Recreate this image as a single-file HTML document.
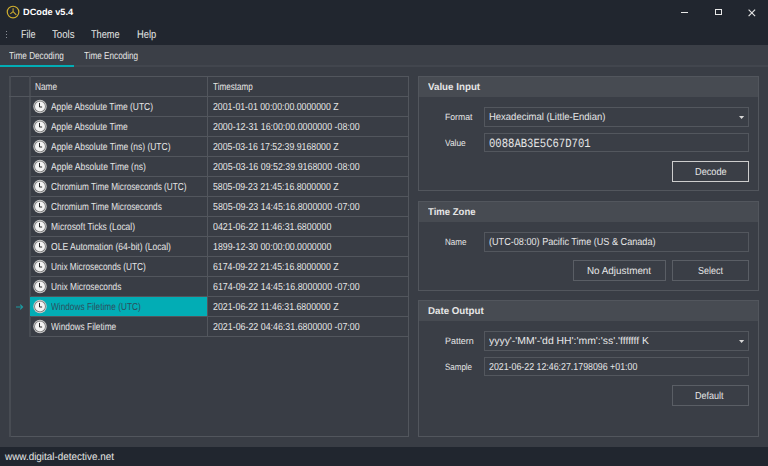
<!DOCTYPE html><html><head><meta charset="utf-8"><style>
html,body{margin:0;padding:0;}
body{width:768px;height:466px;position:relative;overflow:hidden;background:#393d45;font-family:"Liberation Sans",sans-serif;color:#e6e6e6;}
.t{position:absolute;white-space:nowrap;line-height:1;transform-origin:0 0;text-rendering:geometricPrecision;}
</style></head><body>
<div style="position:absolute;left:0px;top:0px;width:768px;height:45px;background:#21262f"></div>
<svg width="16" height="16" viewBox="0 0 16 16" style="position:absolute;left:4.55px;top:4.4px"><circle cx="8.05" cy="8.05" r="5.8" stroke="#cfae2f" stroke-width="1.2" fill="none"/><path d="M8.1 4.2V7.6L5.3 9.9M8.1 7.6L11.3 10.8" stroke="#cfae2f" stroke-width="1.05" fill="none"/></svg>
<div class="t" style="left:23.30px;top:8px;font-size:9.1px;font-family:'Liberation Sans',sans-serif;font-weight:bold;color:#ffffff;transform:scaleX(1.0129);">DCode v5.4</div>
<div style="position:absolute;left:681px;top:12px;width:7px;height:1.2px;background:#e8e8e8"></div>
<div style="position:absolute;left:715px;top:9px;width:7px;height:6px;border:1.2px solid #e8e8e8;box-sizing:border-box"></div>
<svg width="10" height="10" viewBox="0 0 10 10" style="position:absolute;left:747px;top:7.6px"><path d="M1.6 1.6L8.1 8.1M8.1 1.6L1.6 8.1" stroke="#e4e4e4" stroke-width="1.15"/></svg>
<div style="position:absolute;left:6px;top:31px;width:1px;height:1px;background:#8a8e96"></div>
<div style="position:absolute;left:6px;top:34px;width:1px;height:1px;background:#8a8e96"></div>
<div style="position:absolute;left:6px;top:37px;width:1px;height:1px;background:#8a8e96"></div>
<div class="t" style="left:20.80px;top:30px;font-size:11.3px;font-family:'Liberation Sans',sans-serif;transform:scaleX(0.8020);">File</div>
<div class="t" style="left:52.00px;top:30px;font-size:11.3px;font-family:'Liberation Sans',sans-serif;transform:scaleX(0.8569);">Tools</div>
<div class="t" style="left:91.30px;top:30px;font-size:11.3px;font-family:'Liberation Sans',sans-serif;transform:scaleX(0.8133);">Theme</div>
<div class="t" style="left:137.20px;top:30px;font-size:11.3px;font-family:'Liberation Sans',sans-serif;transform:scaleX(0.8260);">Help</div>
<div style="position:absolute;left:0px;top:45px;width:768px;height:20px;background:#3b3f47"></div>
<div style="position:absolute;left:74px;top:65px;width:694px;height:2px;background:#42464e"></div>
<div style="position:absolute;left:0px;top:65px;width:74px;height:2px;background:#02adb5"></div>
<div class="t" style="left:9.40px;top:52px;font-size:10.2px;font-family:'Liberation Sans',sans-serif;transform:scaleX(0.8033);">Time Decoding</div>
<div class="t" style="left:83.75px;top:52px;font-size:10.2px;font-family:'Liberation Sans',sans-serif;transform:scaleX(0.8004);">Time Encoding</div>
<div style="position:absolute;left:9px;top:76px;width:400px;height:361px;background:#393d45;border:1px solid #52565d;box-sizing:border-box"></div>
<div style="position:absolute;left:9px;top:76px;width:2px;height:361px;background:#484c53"></div>
<div style="position:absolute;left:29px;top:76px;width:2px;height:261px;background:#484c53"></div>
<div style="position:absolute;left:207px;top:76px;width:1px;height:261px;background:#52565d"></div>
<div style="position:absolute;left:9px;top:96px;width:400px;height:1px;background:#52565d"></div>
<div class="t" style="left:34.70px;top:83px;font-size:10.2px;font-family:'Liberation Sans',sans-serif;transform:scaleX(0.8135);">Name</div>
<div class="t" style="left:212.90px;top:83px;font-size:10.2px;font-family:'Liberation Sans',sans-serif;transform:scaleX(0.7970);">Timestamp</div>
<div style="position:absolute;left:31px;top:116px;width:377px;height:1px;background:#52565d"></div>
<svg width="14" height="15" viewBox="0 0 14 15" style="position:absolute;left:33px;top:99px"><circle cx="7" cy="7.5" r="6.7" fill="#c9c9c9"/><circle cx="7" cy="7.5" r="5.7" fill="#6e6e6e"/><circle cx="7" cy="7.5" r="5.0" fill="#f3f3f3"/><path d="M6.5 3.9V8H9.1" stroke="#2a2a2a" stroke-width="1" fill="none"/></svg>
<div class="t" style="left:50.80px;top:103px;font-size:10.2px;font-family:'Liberation Sans',sans-serif;transform:scaleX(0.8262);">Apple Absolute Time (UTC)</div>
<div class="t" style="left:212.90px;top:103px;font-size:10.2px;font-family:'Liberation Sans',sans-serif;transform:scaleX(0.8591);">2001-01-01 00:00:00.0000000 Z</div>
<div style="position:absolute;left:31px;top:136px;width:377px;height:1px;background:#52565d"></div>
<svg width="14" height="15" viewBox="0 0 14 15" style="position:absolute;left:33px;top:119px"><circle cx="7" cy="7.5" r="6.7" fill="#c9c9c9"/><circle cx="7" cy="7.5" r="5.7" fill="#6e6e6e"/><circle cx="7" cy="7.5" r="5.0" fill="#f3f3f3"/><path d="M6.5 3.9V8H9.1" stroke="#2a2a2a" stroke-width="1" fill="none"/></svg>
<div class="t" style="left:50.80px;top:123px;font-size:10.2px;font-family:'Liberation Sans',sans-serif;transform:scaleX(0.8269);">Apple Absolute Time</div>
<div class="t" style="left:212.90px;top:123px;font-size:10.2px;font-family:'Liberation Sans',sans-serif;transform:scaleX(0.8686);">2000-12-31 16:00:00.0000000 -08:00</div>
<div style="position:absolute;left:31px;top:156px;width:377px;height:1px;background:#52565d"></div>
<svg width="14" height="15" viewBox="0 0 14 15" style="position:absolute;left:33px;top:139px"><circle cx="7" cy="7.5" r="6.7" fill="#c9c9c9"/><circle cx="7" cy="7.5" r="5.7" fill="#6e6e6e"/><circle cx="7" cy="7.5" r="5.0" fill="#f3f3f3"/><path d="M6.5 3.9V8H9.1" stroke="#2a2a2a" stroke-width="1" fill="none"/></svg>
<div class="t" style="left:50.80px;top:143px;font-size:10.2px;font-family:'Liberation Sans',sans-serif;transform:scaleX(0.8307);">Apple Absolute Time (ns) (UTC)</div>
<div class="t" style="left:212.90px;top:143px;font-size:10.2px;font-family:'Liberation Sans',sans-serif;transform:scaleX(0.8591);">2005-03-16 17:52:39.9168000 Z</div>
<div style="position:absolute;left:31px;top:176px;width:377px;height:1px;background:#52565d"></div>
<svg width="14" height="15" viewBox="0 0 14 15" style="position:absolute;left:33px;top:159px"><circle cx="7" cy="7.5" r="6.7" fill="#c9c9c9"/><circle cx="7" cy="7.5" r="5.7" fill="#6e6e6e"/><circle cx="7" cy="7.5" r="5.0" fill="#f3f3f3"/><path d="M6.5 3.9V8H9.1" stroke="#2a2a2a" stroke-width="1" fill="none"/></svg>
<div class="t" style="left:50.80px;top:163px;font-size:10.2px;font-family:'Liberation Sans',sans-serif;transform:scaleX(0.8369);">Apple Absolute Time (ns)</div>
<div class="t" style="left:212.90px;top:163px;font-size:10.2px;font-family:'Liberation Sans',sans-serif;transform:scaleX(0.8686);">2005-03-16 09:52:39.9168000 -08:00</div>
<div style="position:absolute;left:31px;top:196px;width:377px;height:1px;background:#52565d"></div>
<svg width="14" height="15" viewBox="0 0 14 15" style="position:absolute;left:33px;top:179px"><circle cx="7" cy="7.5" r="6.7" fill="#c9c9c9"/><circle cx="7" cy="7.5" r="5.7" fill="#6e6e6e"/><circle cx="7" cy="7.5" r="5.0" fill="#f3f3f3"/><path d="M6.5 3.9V8H9.1" stroke="#2a2a2a" stroke-width="1" fill="none"/></svg>
<div class="t" style="left:50.80px;top:183px;font-size:10.2px;font-family:'Liberation Sans',sans-serif;transform:scaleX(0.8056);">Chromium Time Microseconds (UTC)</div>
<div class="t" style="left:212.90px;top:183px;font-size:10.2px;font-family:'Liberation Sans',sans-serif;transform:scaleX(0.8591);">5805-09-23 21:45:16.8000000 Z</div>
<div style="position:absolute;left:31px;top:216px;width:377px;height:1px;background:#52565d"></div>
<svg width="14" height="15" viewBox="0 0 14 15" style="position:absolute;left:33px;top:199px"><circle cx="7" cy="7.5" r="6.7" fill="#c9c9c9"/><circle cx="7" cy="7.5" r="5.7" fill="#6e6e6e"/><circle cx="7" cy="7.5" r="5.0" fill="#f3f3f3"/><path d="M6.5 3.9V8H9.1" stroke="#2a2a2a" stroke-width="1" fill="none"/></svg>
<div class="t" style="left:50.80px;top:203px;font-size:10.2px;font-family:'Liberation Sans',sans-serif;transform:scaleX(0.8051);">Chromium Time Microseconds</div>
<div class="t" style="left:212.90px;top:203px;font-size:10.2px;font-family:'Liberation Sans',sans-serif;transform:scaleX(0.8686);">5805-09-23 14:45:16.8000000 -07:00</div>
<div style="position:absolute;left:31px;top:236px;width:377px;height:1px;background:#52565d"></div>
<svg width="14" height="15" viewBox="0 0 14 15" style="position:absolute;left:33px;top:219px"><circle cx="7" cy="7.5" r="6.7" fill="#c9c9c9"/><circle cx="7" cy="7.5" r="5.7" fill="#6e6e6e"/><circle cx="7" cy="7.5" r="5.0" fill="#f3f3f3"/><path d="M6.5 3.9V8H9.1" stroke="#2a2a2a" stroke-width="1" fill="none"/></svg>
<div class="t" style="left:50.80px;top:223px;font-size:10.2px;font-family:'Liberation Sans',sans-serif;transform:scaleX(0.8290);">Microsoft Ticks (Local)</div>
<div class="t" style="left:212.90px;top:223px;font-size:10.2px;font-family:'Liberation Sans',sans-serif;transform:scaleX(0.8682);">0421-06-22 11:46:31.6800000</div>
<div style="position:absolute;left:31px;top:256px;width:377px;height:1px;background:#52565d"></div>
<svg width="14" height="15" viewBox="0 0 14 15" style="position:absolute;left:33px;top:239px"><circle cx="7" cy="7.5" r="6.7" fill="#c9c9c9"/><circle cx="7" cy="7.5" r="5.7" fill="#6e6e6e"/><circle cx="7" cy="7.5" r="5.0" fill="#f3f3f3"/><path d="M6.5 3.9V8H9.1" stroke="#2a2a2a" stroke-width="1" fill="none"/></svg>
<div class="t" style="left:50.80px;top:243px;font-size:10.2px;font-family:'Liberation Sans',sans-serif;transform:scaleX(0.8373);">OLE Automation (64-bit) (Local)</div>
<div class="t" style="left:212.90px;top:243px;font-size:10.2px;font-family:'Liberation Sans',sans-serif;transform:scaleX(0.8633);">1899-12-30 00:00:00.0000000</div>
<div style="position:absolute;left:31px;top:276px;width:377px;height:1px;background:#52565d"></div>
<svg width="14" height="15" viewBox="0 0 14 15" style="position:absolute;left:33px;top:259px"><circle cx="7" cy="7.5" r="6.7" fill="#c9c9c9"/><circle cx="7" cy="7.5" r="5.7" fill="#6e6e6e"/><circle cx="7" cy="7.5" r="5.0" fill="#f3f3f3"/><path d="M6.5 3.9V8H9.1" stroke="#2a2a2a" stroke-width="1" fill="none"/></svg>
<div class="t" style="left:50.80px;top:263px;font-size:10.2px;font-family:'Liberation Sans',sans-serif;transform:scaleX(0.8129);">Unix Microseconds (UTC)</div>
<div class="t" style="left:212.90px;top:263px;font-size:10.2px;font-family:'Liberation Sans',sans-serif;transform:scaleX(0.8591);">6174-09-22 21:45:16.8000000 Z</div>
<div style="position:absolute;left:31px;top:296px;width:377px;height:1px;background:#52565d"></div>
<svg width="14" height="15" viewBox="0 0 14 15" style="position:absolute;left:33px;top:279px"><circle cx="7" cy="7.5" r="6.7" fill="#c9c9c9"/><circle cx="7" cy="7.5" r="5.7" fill="#6e6e6e"/><circle cx="7" cy="7.5" r="5.0" fill="#f3f3f3"/><path d="M6.5 3.9V8H9.1" stroke="#2a2a2a" stroke-width="1" fill="none"/></svg>
<div class="t" style="left:50.80px;top:283px;font-size:10.2px;font-family:'Liberation Sans',sans-serif;transform:scaleX(0.8183);">Unix Microseconds</div>
<div class="t" style="left:212.90px;top:283px;font-size:10.2px;font-family:'Liberation Sans',sans-serif;transform:scaleX(0.8686);">6174-09-22 14:45:16.8000000 -07:00</div>
<div style="position:absolute;left:30px;top:297px;width:177px;height:19px;background:#02adb5"></div>
<svg width="9" height="8" viewBox="0 0 9 8" style="position:absolute;left:15px;top:303px"><path d="M1 4H7.6M5.2 1.6L7.6 4L5.2 6.4" stroke="#1d9aa1" stroke-width="1.1" fill="none"/></svg>
<div style="position:absolute;left:31px;top:316px;width:377px;height:1px;background:#52565d"></div>
<svg width="14" height="15" viewBox="0 0 14 15" style="position:absolute;left:33px;top:299px"><circle cx="7" cy="7.5" r="6.7" fill="#c9c9c9"/><circle cx="7" cy="7.5" r="5.7" fill="#6e6e6e"/><circle cx="7" cy="7.5" r="5.0" fill="#f3f3f3"/><path d="M6.5 3.9V8H9.1" stroke="#2a2a2a" stroke-width="1" fill="none"/></svg>
<div class="t" style="left:50.80px;top:303px;font-size:10.2px;font-family:'Liberation Sans',sans-serif;color:#2c4f5e;transform:scaleX(0.8126);">Windows Filetime (UTC)</div>
<div class="t" style="left:212.90px;top:303px;font-size:10.2px;font-family:'Liberation Sans',sans-serif;transform:scaleX(0.8635);">2021-06-22 11:46:31.6800000 Z</div>
<div style="position:absolute;left:31px;top:336px;width:377px;height:1px;background:#52565d"></div>
<svg width="14" height="15" viewBox="0 0 14 15" style="position:absolute;left:33px;top:319px"><circle cx="7" cy="7.5" r="6.7" fill="#c9c9c9"/><circle cx="7" cy="7.5" r="5.7" fill="#6e6e6e"/><circle cx="7" cy="7.5" r="5.0" fill="#f3f3f3"/><path d="M6.5 3.9V8H9.1" stroke="#2a2a2a" stroke-width="1" fill="none"/></svg>
<div class="t" style="left:50.80px;top:323px;font-size:10.2px;font-family:'Liberation Sans',sans-serif;transform:scaleX(0.8171);">Windows Filetime</div>
<div class="t" style="left:212.90px;top:323px;font-size:10.2px;font-family:'Liberation Sans',sans-serif;transform:scaleX(0.8686);">2021-06-22 04:46:31.6800000 -07:00</div>
<div style="position:absolute;left:418px;top:76px;width:341px;height:115px;background:#3a3e46;border:1px solid #52565d;box-sizing:border-box"></div>
<div style="position:absolute;left:419px;top:77px;width:339px;height:20px;background:#474b52"></div>
<div class="t" style="left:427.90px;top:83px;font-size:10.0px;font-family:'Liberation Sans',sans-serif;font-weight:bold;transform:scaleX(0.9768);">Value Input</div>
<div class="t" style="left:445.00px;top:113px;font-size:9.2px;font-family:'Liberation Sans',sans-serif;transform:scaleX(0.9438);">Format</div>
<div style="position:absolute;left:484px;top:107px;width:265px;height:20px;border:1px solid #53575e;box-sizing:border-box"></div>
<div class="t" style="left:489.25px;top:113px;font-size:10.2px;font-family:'Liberation Sans',sans-serif;transform:scaleX(0.9303);">Hexadecimal (Little-Endian)</div>
<svg width="6" height="4" style="position:absolute;left:739px;top:116px"><path d="M0 0H5.2L2.6 2.9Z" fill="#d8d8d8"/></svg>
<div class="t" style="left:445.20px;top:139px;font-size:9.2px;font-family:'Liberation Sans',sans-serif;transform:scaleX(0.9105);">Value</div>
<div style="position:absolute;left:484px;top:133px;width:265px;height:19px;border:1px solid #53575e;box-sizing:border-box"></div>
<div class="t" style="left:488.75px;top:138px;font-size:12.6px;font-family:'Liberation Mono',monospace;transform:scaleX(0.8402);">0088AB3E5C67D701</div>
<div style="position:absolute;left:672px;top:161px;width:77px;height:21px;border:1px solid #cdcdcd;box-sizing:border-box"></div>
<div class="t" style="left:694.80px;top:168px;font-size:10.2px;font-family:'Liberation Sans',sans-serif;transform:scaleX(0.9016);">Decode</div>
<div style="position:absolute;left:418px;top:201px;width:341px;height:90px;background:#3a3e46;border:1px solid #52565d;box-sizing:border-box"></div>
<div style="position:absolute;left:419px;top:202px;width:339px;height:20px;background:#474b52"></div>
<div class="t" style="left:427.90px;top:208px;font-size:10.0px;font-family:'Liberation Sans',sans-serif;font-weight:bold;transform:scaleX(0.9534);">Time Zone</div>
<div class="t" style="left:445.20px;top:238px;font-size:9.2px;font-family:'Liberation Sans',sans-serif;transform:scaleX(0.8759);">Name</div>
<div style="position:absolute;left:484px;top:232px;width:265px;height:20px;border:1px solid #53575e;box-sizing:border-box"></div>
<div class="t" style="left:489.10px;top:238px;font-size:10.2px;font-family:'Liberation Sans',sans-serif;transform:scaleX(0.8939);">(UTC-08:00) Pacific Time (US &amp; Canada)</div>
<div style="position:absolute;left:573px;top:260px;width:93px;height:21px;border:1px solid #5a5e65;box-sizing:border-box"></div>
<div class="t" style="left:586.90px;top:267px;font-size:10.2px;font-family:'Liberation Sans',sans-serif;transform:scaleX(0.9671);">No Adjustment</div>
<div style="position:absolute;left:672px;top:260px;width:77px;height:21px;border:1px solid #5a5e65;box-sizing:border-box"></div>
<div class="t" style="left:697.60px;top:267px;font-size:10.2px;font-family:'Liberation Sans',sans-serif;transform:scaleX(0.8784);">Select</div>
<div style="position:absolute;left:418px;top:300px;width:341px;height:137px;background:#3a3e46;border:1px solid #52565d;box-sizing:border-box"></div>
<div style="position:absolute;left:419px;top:301px;width:339px;height:20px;background:#474b52"></div>
<div class="t" style="left:427.90px;top:307px;font-size:10.0px;font-family:'Liberation Sans',sans-serif;font-weight:bold;transform:scaleX(0.9734);">Date Output</div>
<div class="t" style="left:445.00px;top:337px;font-size:9.2px;font-family:'Liberation Sans',sans-serif;transform:scaleX(0.9710);">Pattern</div>
<div style="position:absolute;left:484px;top:331px;width:265px;height:20px;border:1px solid #53575e;box-sizing:border-box"></div>
<div class="t" style="left:489.10px;top:337px;font-size:10.2px;font-family:'Liberation Sans',sans-serif;transform:scaleX(1.0227);">yyyy'-'MM'-'dd HH':'mm':'ss'.'fffffff K</div>
<svg width="6" height="4" style="position:absolute;left:739px;top:340px"><path d="M0 0H5.2L2.6 2.9Z" fill="#d8d8d8"/></svg>
<div class="t" style="left:445.00px;top:363px;font-size:9.2px;font-family:'Liberation Sans',sans-serif;transform:scaleX(0.8687);">Sample</div>
<div style="position:absolute;left:484px;top:357px;width:265px;height:19px;border:1px solid #53575e;box-sizing:border-box"></div>
<div class="t" style="left:489.10px;top:363px;font-size:10.2px;font-family:'Liberation Sans',sans-serif;transform:scaleX(0.8655);">2021-06-22 12:46:27.1798096 +01:00</div>
<div style="position:absolute;left:672px;top:385px;width:77px;height:21px;border:1px solid #5a5e65;box-sizing:border-box"></div>
<div class="t" style="left:695.20px;top:392px;font-size:10.2px;font-family:'Liberation Sans',sans-serif;transform:scaleX(0.8851);">Default</div>
<div style="position:absolute;left:0px;top:447px;width:768px;height:19px;background:#21262f"></div>
<div class="t" style="left:5.35px;top:452px;font-size:10.5px;font-family:'Liberation Sans',sans-serif;transform:scaleX(0.9429);">www.digital-detective.net</div>
</body></html>
